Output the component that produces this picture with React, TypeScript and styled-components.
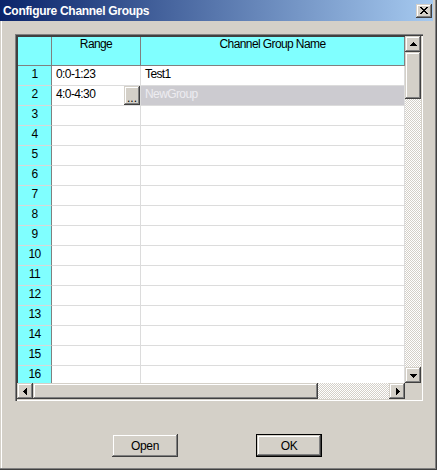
import styled, { createGlobalStyle, css } from 'styled-components'

const GlobalStyle = createGlobalStyle`
  html, body {
    margin: 0;
    padding: 0;
    background: #d4d0c8;
  }
  body {
    font-family: 'Liberation Sans', Arial, sans-serif;
    font-size: 12px;
    color: #000;
  }
  * {
    box-sizing: border-box;
  }
`

const raised = css`
  background: #d4d0c8;
  box-shadow: inset -1px -1px #404040, inset 1px 1px #d4d0c8,
    inset -2px -2px #808080, inset 2px 2px #fff;
`

const Window = styled.div`
  width: 437px;
  height: 470px;
  display: flex;
  flex-direction: column;
  background: #d4d0c8;
  box-shadow: inset -1px -1px #404040, inset -2px -2px #808080,
    inset 1px 0 #d4d0c8, inset 2px 0 #fff;
`

const TitleBar = styled.div`
  height: 21px;
  margin-right: 4px;
  padding: 0 1px 0 3px;
  display: flex;
  align-items: center;
  justify-content: space-between;
  background: linear-gradient(to right, #0a246a, #a6caf0);
`

const Title = styled.span`
  color: #fff;
  font-weight: bold;
  font-size: 12px;
  letter-spacing: -0.3px;
  padding-top: 1px;
`

const CloseButton = styled.div`
  ${raised};
  width: 16px;
  height: 14px;
  display: flex;
  align-items: center;
  justify-content: center;
  padding: 0 1px 1px 0;
`

const Body = styled.div`
  padding: 13px 14px 0 15px;
  display: flex;
  flex-direction: column;
`

const Frame = styled.div`
  width: 408px;
  height: 367px;
  padding: 2px;
  box-shadow: inset 1px 1px #808080, inset 2px 2px #404040,
    inset -1px -1px #fff, inset -2px -2px #d4d0c8;
`

const GridArea = styled.div`
  height: 100%;
  display: grid;
  grid-template-columns: 1fr 16px;
  grid-template-rows: 1fr 16px;
`

const Viewport = styled.div`
  overflow: hidden;
  border-left: 1px solid #404040;
  border-top: 1px solid #404040;
  background: #fff;
`

const Table = styled.div`
  display: grid;
  grid-template-columns: 34px 89px 1fr;
  grid-template-rows: 29px;
  grid-auto-rows: 20px;
  letter-spacing: -0.6px;
`

const HeadCell = styled.div`
  background: #80ffff;
  border-right: 1px solid #808080;
  border-bottom: 1px solid #808080;
  text-align: center;
  line-height: 15px;
`

const RowHead = styled.div`
  background: #80ffff;
  border-right: 1px solid #808080;
  border-bottom: 1px solid #d8d8d8;
  text-align: center;
  line-height: 16px;
`

const Cell = styled.div<{ $editing?: boolean }>`
  display: flex;
  align-items: stretch;
  border-right: 1px solid #dcdcdc;
  border-bottom: 1px solid #dcdcdc;
  background: ${(p) => (p.$editing ? '#cccbd0' : '#fff')};
  color: ${(p) => (p.$editing ? '#ececf0' : '#000')};
  line-height: 16px;
  padding-left: 4px;
`

const CellText = styled.span`
  flex: 1;
`

const DotsButton = styled.div`
  ${raised};
  width: 16px;
  text-align: center;
  line-height: 24px;
  letter-spacing: 0;
`

const VScroll = styled.div`
  display: flex;
  flex-direction: column;
`

const HScroll = styled.div`
  display: flex;
`

const ScrollButton = styled.div`
  ${raised};
  width: 16px;
  height: 16px;
  flex: none;
  display: flex;
  align-items: center;
  justify-content: center;
`

const Thumb = styled.div<{ $size: number; $vertical?: boolean }>`
  ${raised};
  flex: none;
  ${(p) => (p.$vertical ? `height: ${p.$size}px;` : `width: ${p.$size}px;`)}
`

const Track = styled.div`
  flex: 1;
  background: repeating-conic-gradient(#fff 0% 25%, #d4d0c8 0% 50%) 0 0 / 2px 2px;
`

const Corner = styled.div`
  background: #d4d0c8;
`

const ButtonRow = styled.div`
  margin-top: 33px;
  display: flex;
  justify-content: center;
  gap: 78px;
  padding-right: 4px;
`

const PushButton = styled.div<{ $default?: boolean }>`
  ${raised};
  width: 66px;
  height: 23px;
  display: flex;
  align-items: center;
  justify-content: center;
  letter-spacing: -0.3px;
  ${(p) =>
    p.$default &&
    css`
      border: 1px solid #000;
    `}
`

type Dir = 'up' | 'down' | 'left' | 'right'

const rotation: Record<Dir, number> = { up: 0, right: 90, down: 180, left: 270 }

const Arrow = ({ dir }: { dir: Dir }) => (
  <svg
    width="7"
    height="7"
    viewBox="0 0 7 7"
    shapeRendering="crispEdges"
    style={{ transform: `rotate(${rotation[dir]}deg)` }}
  >
    <path d="M3 1h1v1h1v1h1v1h1v1H0V4h1V3h1V2h1z" fill="#000" />
  </svg>
)

const CloseIcon = () => (
  <svg width="8" height="7" viewBox="0 0 8 7" shapeRendering="crispEdges">
    <path
      d="M0 0h2v1h1v1h2V1h1V0h2v1H7v1H6v1H5v1h1v1h1v1h1v1H6V6H5V5H3v1H2v1H0V6h1V5h1V4h1V3H2V2H1V1H0z"
      fill="#000"
    />
  </svg>
)

type Row = { range: string; name: string; editing?: boolean }

const rows: Row[] = [
  { range: '0:0-1:23', name: 'Test1' },
  { range: '4:0-4:30', name: 'NewGroup', editing: true },
]

const App = () => {
  const all = Array.from({ length: 16 }, (_, i) => rows[i] || { range: '', name: '' })

  return (
    <>
      <GlobalStyle />
      <Window>
        <TitleBar>
          <Title>Configure Channel Groups</Title>
          <CloseButton>
            <CloseIcon />
          </CloseButton>
        </TitleBar>
        <Body>
          <Frame>
            <GridArea>
              <Viewport>
                <Table>
                  <HeadCell />
                  <HeadCell>Range</HeadCell>
                  <HeadCell>Channel Group Name</HeadCell>
                  {all.map((row, index) => [
                    <RowHead key={`${index}+num`}>{index + 1}</RowHead>,
                    <Cell key={`${index}+range`}>
                      <CellText>{row.range}</CellText>
                      {row.editing && <DotsButton>...</DotsButton>}
                    </Cell>,
                    <Cell key={`${index}+name`} $editing={row.editing}>
                      <CellText>{row.name}</CellText>
                    </Cell>,
                  ])}
                </Table>
              </Viewport>
              <VScroll>
                <ScrollButton>
                  <Arrow dir="up" />
                </ScrollButton>
                <Thumb $vertical $size={47} />
                <Track />
                <ScrollButton>
                  <Arrow dir="down" />
                </ScrollButton>
              </VScroll>
              <HScroll>
                <ScrollButton>
                  <Arrow dir="left" />
                </ScrollButton>
                <Thumb $size={285} />
                <Track />
                <ScrollButton>
                  <Arrow dir="right" />
                </ScrollButton>
              </HScroll>
              <Corner />
            </GridArea>
          </Frame>
          <ButtonRow>
            <PushButton>Open</PushButton>
            <PushButton $default>OK</PushButton>
          </ButtonRow>
        </Body>
      </Window>
    </>
  )
}

export default App
